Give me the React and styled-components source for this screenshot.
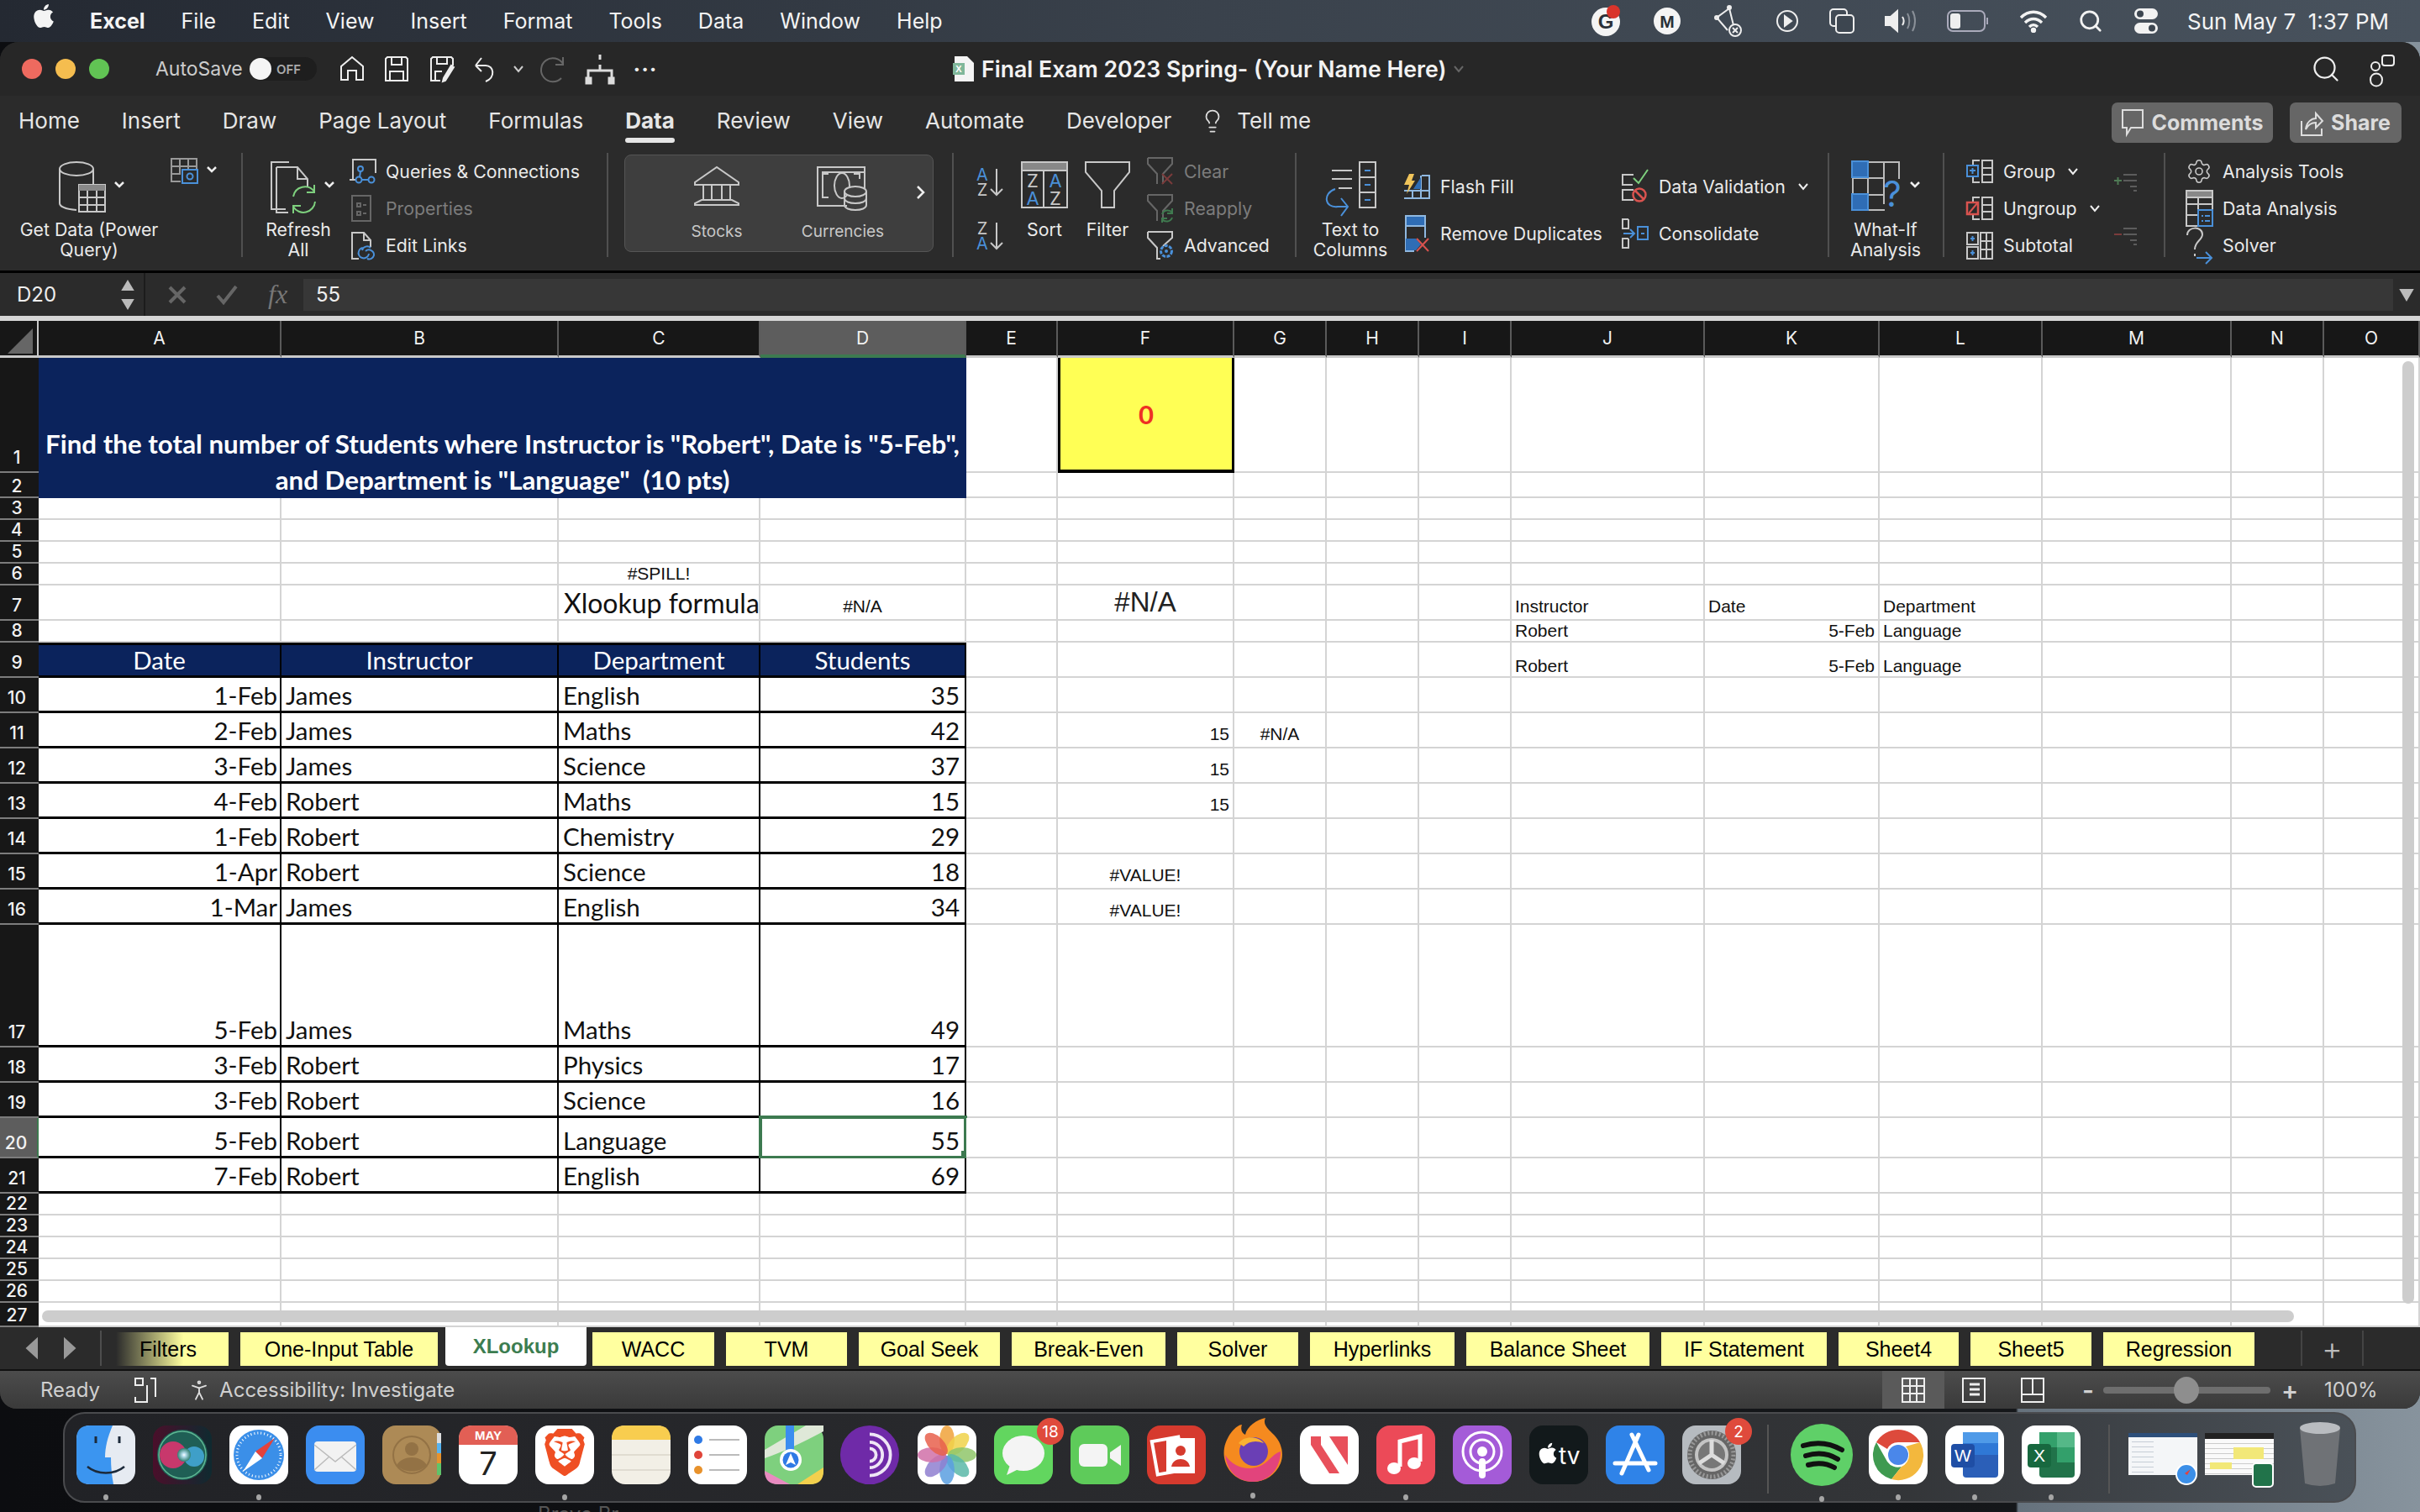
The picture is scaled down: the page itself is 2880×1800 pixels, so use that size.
import React from "react";
import styled, { createGlobalStyle, css } from "styled-components";
import { FaApple, FaSpotify } from "react-icons/fa";
import { SiBrave } from "react-icons/si";
import { Lightbulb, Settings, Search, PersonStanding } from "lucide-react";

const UI = '"Inter", "Liberation Sans", sans-serif';
const ARIAL = '"Liberation Sans", Arial, sans-serif';
const SHEET = 'Lato, "Open Sans", sans-serif';
const G = "#c8c8c8";
const DIM = "#666";
const BLUE = "#4a90d9";
const GREEN = "#3d7a50";

const Global = createGlobalStyle`
  html, body { margin: 0; padding: 0; width: 2880px; height: 1800px; overflow: hidden; }
  * { box-sizing: border-box; }
`;

/* drawing helper: 1 unit = 1 page pixel */
const Ic = ({ w, h, children, color = G, sw = 2 }) => (
  <svg width={w} height={h} viewBox={`0 0 ${w} ${h}`} fill="none" stroke={color} strokeWidth={sw} style={{ display: "block", flex: "none", overflow: "visible" }}>
    {children}
  </svg>
);
const Chev = ({ x, y }) => <path d={`M${x - 5} ${y - 3}l5 5 5-5`} stroke="#eee" strokeWidth="2.5" />;
const Letter = ({ x, y, c, fill = G, size = 20 }) => (
  <text x={x} y={y} fontFamily={UI} fontSize={size} fill={fill} stroke="none" textAnchor="middle">{c}</text>
);

/* ---------- ribbon icons ---------- */
const GetDataIcon = () => (
  <Ic w={90} h={62}>
    <ellipse cx="30" cy="9" rx="20" ry="8" />
    <path d="M10 9v41c0 4 8 7 20 8M50 9v19" />
    <rect x="33" y="28" width="31" height="32" />
    <rect x="33" y="28" width="31" height="7" fill="#888" stroke="none" />
    <path d="M43 35v25M54 35v25M33 43h31M33 52h31" />
    <Chev x={81} y={28} />
  </Ic>
);
const CameraIcon = () => (
  <Ic w={60} h={32} color="#999">
    <path d="M12 28H1V1h30v12M1 10h30M1 19h11M11 1v18M21 1v12" />
    <rect x="14" y="14" width="18" height="16" stroke={BLUE} />
    <circle cx="23" cy="22" r="3.5" stroke={BLUE} />
    <Chev x={49} y={14} />
  </Ic>
);
const RefreshIcon = () => (
  <Ic w={90} h={62}>
    <path d="M34 1H13v56h17M19 7h25l12 14v10M19 7v54h14M44 7v14h12" />
    <path d="M39 42a14 14 0 0 1 25-6M65 48a14 14 0 0 1-26 6M64 28v9h-9M39 62v-9h9" stroke="#7ed07e" />
    <Chev x={82} y={28} />
  </Ic>
);
const QueriesIcon = () => (
  <Ic w={32} h={30}>
    <path d="M5 24V1h27v16M1 25h8" />
    <g stroke={BLUE}>
      <circle cx="14" cy="12" r="3" /><circle cx="12" cy="25" r="3.5" /><circle cx="27" cy="25" r="3.5" />
      <path d="M14 15l-1 7M16 25h7" />
    </g>
  </Ic>
);
const PropertiesIcon = () => (
  <Ic w={32} h={32} color={DIM}>
    <rect x="4" y="1" width="22" height="30" />
    <rect x="10" y="10" width="4" height="4" /><rect x="10" y="20" width="4" height="4" />
    <path d="M17 12h4M17 22h4" />
  </Ic>
);
const EditLinksIcon = () => (
  <Ic w={32} h={34}>
    <path d="M12 33H4V2h14l8 9v8M18 2v9h8" />
    <g stroke={BLUE}>
      <path d="M16 23a6 6 0 0 1 10-3M24 27a6 6 0 0 1-8 5 6 6 0 0 1-4-8 6 6 0 0 1 6-4" />
      <path d="M20 24a6 6 0 0 1 10 5 6 6 0 0 1-8 4" />
    </g>
  </Ic>
);
const StocksIcon = () => (
  <Ic w={56} h={46}>
    <path d="M2 22v-3L28 1l26 18v3zM12 22v18M22 22v18M34 22v18M44 22v18M2 46v-2l8-4h36l8 4v2z" />
  </Ic>
);
const CurrencyIcon = () => (
  <Ic w={62} h={52}>
    <path d="M36 47H1V1h56v30M6 7h52" />
    <path d="M14 9H7v28h7M44 9h7v6" />
    <ellipse cx="30" cy="23" rx="9" ry="15" />
    <ellipse cx="46" cy="30" rx="13" ry="6" fill="#3e3e3e" />
    <path d="M33 30v16c0 4 6 6 13 6s13-2 13-6V30M33 38c0 4 6 6 13 6s13-2 13-6" />
  </Ic>
);
const SortAZ = ({ flip }) => (
  <Ic w={34} h={34}>
    <Letter x={8} y={15} c={flip ? "Z" : "A"} fill={flip ? G : BLUE} size={20} />
    <Letter x={8} y={33} c={flip ? "A" : "Z"} fill={flip ? BLUE : G} size={20} />
    <path d="M25 1v31M18 25l7 7 7-7" />
  </Ic>
);
const SortIcon = () => (
  <Ic w={56} h={56}>
    <rect x="1" y="1" width="54" height="54" />
    <rect x="1" y="1" width="54" height="10" fill="#888" />
    <path d="M27 11v44" />
    <Letter x={14} y={31} c="Z" size={22} /><Letter x={41} y={31} c="A" fill={BLUE} size={22} />
    <Letter x={14} y={52} c="A" fill={BLUE} size={22} /><Letter x={41} y={52} c="Z" size={22} />
  </Ic>
);
const FilterIcon = () => (
  <Ic w={54} h={56}>
    <path d="M1 1h52v12L35 35v20H20V35L1 13z" />
  </Ic>
);
const Funnel = ({ c }) => <path d={`M1 1h29v7L19 20v${c} M1 1v7l11 12v${c}`} />;
const ClearIcon = () => (
  <Ic w={32} h={34} color={DIM}>
    <Funnel c={12} />
    <path d="M18 20l12 12M30 20L18 32" stroke="#7a3b3b" />
  </Ic>
);
const ReapplyIcon = () => (
  <Ic w={32} h={34} color={DIM}>
    <Funnel c={12} />
    <path d="M18 24a7 7 0 0 1 12-2M30 28a7 7 0 0 1-12 2M30 17v6h-6M18 34v-5h6" stroke="#3f7a4f" />
  </Ic>
);
const AdvancedIcon = () => (
  <Ic w={32} h={34}>
    <path d="M1 1h29v7L19 18M1 1v7l11 12v13h4" />
    <circle cx="23" cy="24" r="6.5" stroke={BLUE} strokeWidth="3" strokeDasharray="4 1.5" />
    <circle cx="23" cy="24" r="2" fill={BLUE} stroke="none" />
  </Ic>
);
const TextColsIcon = () => (
  <Ic w={62} h={56}>
    <rect x="42" y="1" width="19" height="54" />
    <path d="M42 19h19M42 37h19" />
    <path d="M48 11h7M48 28h7M48 46h7" stroke={BLUE} />
    <path d="M9 11h24M9 21h24M17 32h16" />
    <path d="M13 33C-2 38 0 56 16 54h12M20 44l8 10-8 11" stroke={BLUE} />
  </Ic>
);
const FlashFillIcon = () => (
  <Ic w={32} h={30}>
    <path d="M1 29h30V2H22M1 20h30M11 20v9M21 2v27" stroke="#8fb8e0" />
    <path d="M12 18L21 4v14z" fill="#2f6db5" stroke="none" />
    <path d="M7 0h6l-3 8h4L4 24l3-11H1z" fill="#f0c45a" stroke="none" />
  </Ic>
);
const RemoveDupIcon = () => (
  <Ic w={32} h={44}>
    <rect x="3" y="1" width="23" height="12" fill="#2f6db5" stroke="#8fb8e0" />
    <path d="M3 13v30h10M26 13v14" stroke="#8fb8e0" />
    <path d="M3 28h12l6 7-6 7H3z" fill="#2f6db5" stroke="none" />
    <path d="M16 28l14 15M30 28L16 43" stroke="#d9534f" />
  </Ic>
);
const ValidationIcon = () => (
  <Ic w={32} h={44}>
    <path d="M14 8H1v12h12M14 26H1v12h13" />
    <path d="M14 12l6 6L31 2" stroke="#7ed07e" />
    <circle cx="21" cy="32" r="7.5" stroke="#d9534f" strokeWidth="2.5" />
    <path d="M16 27l10 10" stroke="#d9534f" strokeWidth="2.5" />
  </Ic>
);
const ConsolidateIcon = () => (
  <Ic w={32} h={36}>
    <path d="M8 1H1v11h7V1M8 24H1v11h7V24" />
    <path d="M2 18h12M10 13l5 5-5 5" stroke={BLUE} />
    <rect x="19" y="10" width="12" height="15" stroke={BLUE} />
    <path d="M23 18h4" stroke={BLUE} />
  </Ic>
);
const WhatIfIcon = () => (
  <Ic w={86} h={56}>
    <path d="M4 1h55v20M4 1v56M4 20h38M4 40h38M22 1v39M41 1v50M4 58h38" stroke="#bbb" />
    <rect x="3" y="0" width="19" height="19" fill="#2f6db5" stroke={BLUE} />
    <rect x="3" y="39" width="19" height="19" fill="#2f6db5" stroke={BLUE} />
    <Letter x={51} y={54} c="?" fill={BLUE} size={42} />
    <Chev x={78} y={28} />
  </Ic>
);
const GroupIcon = () => (
  <Ic w={32} h={28}>
    <path d="M8 7V1h8M8 20v7h8" />
    <rect x="1" y="7" width="13" height="13" stroke={BLUE} />
    <path d="M4 13h7M7.5 10v7" stroke={BLUE} />
    <rect x="19" y="1" width="12" height="26" />
    <path d="M19 10h12M19 18h12" />
  </Ic>
);
const UngroupIcon = () => (
  <Ic w={32} h={28}>
    <path d="M8 6V1h8M8 22v5h8" />
    <rect x="1" y="7" width="13" height="14" stroke="#d9534f" strokeWidth="2.5" />
    <path d="M3 20L13 8" stroke="#d9534f" />
    <rect x="19" y="1" width="12" height="26" />
    <path d="M19 10h12M19 18h12" />
  </Ic>
);
const SubtotalIcon = () => (
  <Ic w={32} h={32}>
    <rect x="1" y="1" width="13" height="14" />
    <rect x="1" y="18" width="13" height="14" />
    <path d="M5 8h5M7.5 5v6M5 25h5M7.5 22v6" stroke={BLUE} />
    <rect x="17" y="1" width="14" height="31" />
    <path d="M24 1v31M17 11h14M17 21h14" />
  </Ic>
);
const IndentIcon = ({ color, plus }) => (
  <Ic w={30} h={22} color="#5c5c5c">
    <path d="M12 2h16M12 9h16M20 16h8M24 21h4" />
    <path d={plus ? "M1 9h9M5.5 5v9" : "M1 9h9"} stroke={color} />
  </Ic>
);
const DataAnalysisIcon = () => (
  <Ic w={32} h={44}>
    <rect x="1" y="1" width="31" height="42" />
    <rect x="1" y="1" width="31" height="8" fill="#888" />
    <path d="M1 17h31M1 30h14M15 9v34" />
    <rect x="15" y="24" width="17" height="19" fill="#2b2b2b" stroke={BLUE} />
    <path d="M19 31h2M23 31h6M19 37h2M23 37h6" stroke={BLUE} />
  </Ic>
);
const SolverIcon = () => (
  <Ic w={32} h={44}>
    <path d="M2 10C2-1 20-1 20 9c0 7-9 8-9 18M11 32v3" />
    <path d="M13 37h18M24 30l7 7-7 7" stroke={BLUE} />
  </Ic>
);

/* ---------- title bar + status icons ---------- */
const HomeIcon = () => <Ic w={30} h={30} color="#eee"><path d="M2 28V12L15 1l13 11v16h-8V17h-10v11z" /></Ic>;
const SaveIcon = () => <Ic w={28} h={30} color="#eee"><path d="M3 1h22l2 2v26H1V3zM8 1v9h12V1M6 29V18h16v11" /></Ic>;
const SaveAsIcon = () => <Ic w={30} h={30} color="#eee"><path d="M12 29H1V3l2-2h22l2 2v8M8 1v8h12V1M6 29V18h8" /><path d="M28 13L18 29l-3 1 1-4 9-15z" fill="#eee" /></Ic>;
const UndoIcon = () => <Ic w={30} h={32} color="#eee"><path d="M3 12h12c10 0 12 14 0 19M3 12l7-9M3 12l7 7" /></Ic>;
const RedoIcon = () => <Ic w={30} h={32} color={DIM}><path d="M26 10A14 14 0 1 0 24 27M26 2v9h-9" /></Ic>;
const ShapeIcon = () => <Ic w={36} h={34} color="#ddd" sw={3}><path d="M18 0v6M18 12v6M4 30v-11h28v11M18 18" /><rect x="2" y="28" width="5" height="6" fill="#ddd" /><rect x="29" y="28" width="5" height="6" fill="#ddd" /></Ic>;
const SmallChev = ({ c = "#ccc" }) => <Ic w={14} h={10} color={c}><path d="M2 2l5 6 5-6" /></Ic>;
const PeopleIcon = () => <Ic w={34} h={34} color="#eee"><rect x="17" y="1" width="14" height="12" rx="3" /><circle cx="9" cy="14" r="5" /><path d="M3 30c0-10 14-10 14 0s-14 10-14 0z" /></Ic>;
const BulbIcon = () => <Lightbulb size={30} color="#ddd" strokeWidth={1.4} />;
const CommentIcon = () => <Ic w={26} h={32} color="#ddd"><path d="M1 1h24v21H11l-5 8v-8H1z" /></Ic>;
const ShareIcon = () => <Ic w={26} h={32} color="#ddd"><path d="M1 14v17h24v-8M6 24c1-9 7-13 12-13V5l8 9-8 8v-6c-5 0-9 2-12 8z" /></Ic>;

const MenuIcons = [
  <svg key="g" width="38" height="40" viewBox="0 0 38 40"><circle cx="18" cy="21" r="17" fill="#f4f4f4" /><text x="18" y="29" fontSize="24" fontWeight="700" fontFamily={ARIAL} textAnchor="middle" fill="#2a3038">G</text><circle cx="27" cy="9" r="8" fill="#d9342b" /></svg>,
  <svg key="m" width="34" height="34" viewBox="0 0 34 34"><circle cx="17" cy="17" r="16" fill="#f4f4f4" /><text x="17" y="25" fontSize="21" fontWeight="700" fontFamily={ARIAL} textAnchor="middle" fill="#2a3038">M</text></svg>,
  <Ic key="c" w={40} h={38} color="#eee"><circle cx="21" cy="3" r="2" fill="#eee" /><path d="M21 4L6 15l13 15M21 4l5 20" /><circle cx="6" cy="15" r="2" /><circle cx="28" cy="30" r="7" /><path d="M25 27l6 6M31 27l-6 6" /></Ic>,
  <Ic key="p" w={28} h={28} color="#eee"><circle cx="14" cy="14" r="12" /><path d="M11 8l8 6-8 6z" fill="#eee" /></Ic>,
  <Ic key="w" w={30} h={30} color="#eee"><rect x="1" y="1" width="20" height="20" rx="4" /><rect x="8" y="8" width="21" height="21" rx="4" fill="#3d4650" /></Ic>,
  <Ic key="v" w={38} h={28} color="#eee"><path d="M1 9h6l8-7v24l-8-7H1z" fill="#eee" /><path d="M21 9c2 3 2 7 0 10" /><path d="M27 5c3 5 3 13 0 18M33 2c4 7 4 17 0 24" stroke="#8a9098" /></Ic>,
  <Ic key="b" w={50} h={26} color="#aab"><rect x="1" y="1" width="44" height="24" rx="6" /><rect x="4" y="4" width="12" height="18" rx="3" fill="#eee" stroke="none" /><path d="M48 9v8" /></Ic>,
  <svg key="wf" width="34" height="28" viewBox="0 0 34 28" fill="none" stroke="#f2f2f2" strokeWidth="3.4"><path d="M2 10c9-9 21-9 30 0M7 16c6-6 14-6 20 0M12 21c3-3 7-3 10 0" /><circle cx="17" cy="25" r="1.5" fill="#f2f2f2" /></svg>,
  <Search key="s" size={30} color="#f2f2f2" strokeWidth={2.2} />,
  <svg key="cc" width="30" height="32" viewBox="0 0 30 32"><rect x="1" y="1" width="28" height="13" rx="6.5" fill="#f2f2f2" /><circle cx="8" cy="7.5" r="4" fill="#3d4650" /><rect x="1" y="18" width="28" height="13" rx="6.5" fill="#f2f2f2" /><circle cx="22" cy="24.5" r="4" fill="#3d4650" /></svg>,
];
const MENU_X = [38, 34, 40, 28, 30, 38, 50, 34, 30, 30];

/* ---------- dock tiles ---------- */
const Tile = ({ children, bg = "#fff", w = 72 }) => (
  <svg width={w} height="72" viewBox="0 0 72 72" style={{ display: "block" }}>
    <rect x="1" y="1" width="70" height="70" rx="16" fill={bg} />
    {children}
  </svg>
);
const Tiles = {
  finder: <Tile bg="#e6ebf2"><path d="M17 1h27c-6 14-9 26-9 38h7c0 11 1 22 3 32H17Q1 71 1 55V17Q1 1 17 1z" fill="#3b95f0" /><path d="M24 14v8M52 14v8" stroke="#1c2a3a" strokeWidth="3" /><path d="M14 50c12 10 32 10 44 0" stroke="#1c2a3a" strokeWidth="2.5" fill="none" /></Tile>,
  siri: (
    <Tile bg="url(#siriBg)">
      <defs>
        <linearGradient id="siriBg" x1="0" x2="1" y1="0" y2="0"><stop offset="0" stopColor="#4a0f2a" /><stop offset="1" stopColor="#0f2a30" /></linearGradient>
        <radialGradient id="siriOrb"><stop offset="0" stopColor="#fff" /><stop offset="0.25" stopColor="#b9e0f0" /><stop offset="1" stopColor="#2f7f70" /></radialGradient>
      </defs>
      <circle cx="36" cy="36" r="30" fill="#1f5f55" />
      <circle cx="36" cy="36" r="28" fill="none" stroke="#5fb894" strokeWidth="1.5" />
      <circle cx="25" cy="36" r="16" fill="#c8386c" />
      <circle cx="50" cy="38" r="12" fill="#3f9fc8" />
      <circle cx="38" cy="36" r="8" fill="url(#siriOrb)" />
    </Tile>
  ),
  safari: <Tile><circle cx="36" cy="36" r="30" fill="#3b8fe8" /><circle cx="36" cy="36" r="26" fill="none" stroke="#fff" strokeWidth="3" strokeDasharray="1 3" /><path d="M55 16L40 40 32 32z" fill="#e4423c" /><path d="M17 56l15-24 8 8z" fill="#fff" /></Tile>,
  mail: <Tile bg="#3b8df0"><rect x="11" y="20" width="50" height="36" rx="4" fill="#f2f2f2" /><path d="M11 24l25 20 25-20M11 54l18-16M61 54L43 38" stroke="#bbb" strokeWidth="1.5" fill="none" /></Tile>,
  contacts: <Tile bg="#ad8a56"><path d="M66 10h5v12h-5z" fill="#ddd" /><path d="M66 22h5v12h-5z" fill="#56b3f0" /><path d="M66 34h5v12h-5z" fill="#e8922c" /><path d="M66 46h5v14h-5z" fill="#5fc46a" /><circle cx="36" cy="36" r="22" fill="none" stroke="#937245" strokeWidth="2" /><circle cx="36" cy="29" r="8" fill="#937245" /><path d="M18 48c8-12 28-12 36 0-8 10-28 10-36 0z" fill="#937245" /></Tile>,
  calendar: <Tile><path d="M1 24V17Q1 1 17 1h38q16 0 16 16v7z" fill="#e25f55" /><text x="36" y="18" textAnchor="middle" fontFamily={ARIAL} fontWeight="700" fontSize="15" fill="#fff">MAY</text><text x="36" y="60" textAnchor="middle" fontFamily={UI} fontSize="38" fill="#222">7</text></Tile>,
  brave: <Tile><foreignObject x="8" y="5" width="56" height="62"><SiBrave size={56} color="#ef4f23" /></foreignObject></Tile>,
  notes: <Tile bg="#f2efe6"><path d="M1 18V17Q1 1 17 1h38q16 0 16 16v1z" fill="#f8cd4f" /><path d="M1 36h70M1 54h70" stroke="#dad6ca" strokeWidth="1.5" /></Tile>,
  reminders: <Tile><circle cx="13" cy="18" r="5" fill="#2f7ae5" /><circle cx="13" cy="36" r="5" fill="#e0453a" /><circle cx="13" cy="54" r="5" fill="#e8922c" /><path d="M26 18h36M26 36h36M26 54h36" stroke="#bbb" strokeWidth="2" /></Tile>,
  maps: <Tile bg="#7ed07e"><path d="M1 40Q30 30 71 8V1H50L1 30z" fill="#dfe8d8" /><path d="M1 55l30 16H17Q1 71 1 55z" fill="#e88ac0" /><path d="M40 71l31-20v4q0 16-16 16z" fill="#f3d04d" /><path d="M26 1h10v30H26z" fill="#3b8df0" /><circle cx="32" cy="42" r="13" fill="#fff" /><circle cx="32" cy="42" r="9.5" fill="#2f7ae5" /><path d="M32 34l6 14-6-3-6 3z" fill="#fff" /></Tile>,
  tor: <svg width="76" height="72" viewBox="0 0 76 76" style={{ display: "block", marginLeft: -2 }}><circle cx="38" cy="38" r="37" fill="#6f2aa8" /><path d="M38 12a26 26 0 0 1 0 52M38 22a16 16 0 0 1 0 32M38 30a8 8 0 0 1 0 16" fill="none" stroke="#efe6f6" strokeWidth="4" /></svg>,
  photos: <Tile>{["#f0a23a","#f0d24a","#8fc66a","#5bb8a8","#5b9fe0","#8f7fd0","#d070a8","#e8604c"].map((c, i) => <ellipse key={c} cx="36" cy="18" rx="9" ry="17" fill={c} opacity="0.85" transform={`rotate(${i * 45} 36 36)`} />)}</Tile>,
  messages: <Tile bg="#62d65f"><ellipse cx="36" cy="34" rx="25" ry="21" fill="#f4f4f4" /><path d="M20 48l-4 12 14-7z" fill="#f4f4f4" /></Tile>,
  facetime: <Tile bg="#5ecb5a"><rect x="11" y="23" width="34" height="27" rx="6" fill="#f4f4f4" /><path d="M48 33l13-9v25l-13-9z" fill="#f4f4f4" /></Tile>,
  booth: <Tile bg="#d63a2e"><rect x="10" y="17" width="32" height="40" fill="none" stroke="#fff" strokeWidth="4" transform="rotate(-10 26 37)" /><rect x="24" y="16" width="34" height="42" fill="#fff" /><circle cx="41" cy="31" r="6" fill="#d63a2e" /><path d="M30 50c2-12 20-12 22 0z" fill="#d63a2e" /></Tile>,
  firefox: <svg width="78" height="78" viewBox="0 0 78 78" style={{ display: "block", margin: "-8px -3px 0" }}><path d="M39 76C14 76 2 54 5 36 8 20 20 8 26 8c-2 6 0 10 4 12C32 10 44 2 54 0c-4 8 4 14 10 20 10 10 12 24 8 34-6 14-18 22-33 22z" fill="#f58a1f" /><path d="M39 76C20 76 8 62 6 44c10 16 30 20 44 12 10-6 14-14 22-16 0 20-14 36-33 36z" fill="#e2447c" /><circle cx="40" cy="40" r="17" fill="#6a3fb5" /><path d="M22 30c8-10 24-8 30 0-10-4-18-2-24 4z" fill="#f9b233" /></svg>,
  news: <Tile><path d="M14 14h44v44H14z" fill="#e8505b" /><path d="M26 14h10l22 34v10H48L26 24zM14 24l22 34H14z" fill="#fff" /></Tile>,
  music: <Tile bg="#ec4a58"><path d="M29 50V20l24-6v30" fill="none" stroke="#fff" strokeWidth="5" /><ellipse cx="22" cy="52" rx="8" ry="7" fill="#fff" /><ellipse cx="46" cy="46" rx="8" ry="7" fill="#fff" /></Tile>,
  podcasts: <Tile bg="#a45bd8"><circle cx="36" cy="32" r="23" fill="none" stroke="#fff" strokeWidth="3" /><circle cx="36" cy="32" r="14" fill="none" stroke="#fff" strokeWidth="3" /><circle cx="36" cy="32" r="6" fill="#fff" /><rect x="32" y="40" width="8" height="24" rx="4" fill="#fff" /></Tile>,
  tv: <Tile bg="#12191b"><foreignObject x="9" y="20" width="28" height="32"><FaApple size={28} color="#fff" /></foreignObject><text x="36" y="47" fontFamily={UI} fontSize="28" fill="#fff">tv</text></Tile>,
  appstore: <Tile bg="#2f83e8"><path d="M40 12L20 58M32 12l20 42M12 46h48" stroke="#fff" strokeWidth="5" strokeLinecap="round" fill="none" /></Tile>,
  prefs: <Tile bg="#b6bbc0"><circle cx="36" cy="36" r="29" fill="#666" /><circle cx="36" cy="36" r="26" fill="none" stroke="#999" strokeWidth="5" strokeDasharray="2 2.5" /><circle cx="36" cy="36" r="20" fill="#c4c4c4" /><circle cx="36" cy="36" r="16" fill="#777" /><path d="M36 36V18M36 36L21 46M36 36l15 10" stroke="#ddd" strokeWidth="5" /></Tile>,
  spotify: <svg width="76" height="76" viewBox="0 0 76 76" style={{ display: "block", margin: "-2px -2px 0" }}><circle cx="38" cy="38" r="37" fill="#5fd068" /><path d="M16 27c16-5 32-3 46 5M19 39c13-4 27-3 38 4M22 50c11-3 22-2 31 3" stroke="#111" strokeWidth="6" strokeLinecap="round" fill="none" /></svg>,
  chrome: <Tile><path d="M36 6a30 30 0 0 1 26 15H36a15 15 0 0 0-13 8L10 21A30 30 0 0 1 36 6z" fill="#dd4a3c" /><path d="M10 21l13 23a15 15 0 0 0 17 6L28 65A30 30 0 0 1 10 21z" fill="#3f9a50" /><path d="M62 21a30 30 0 0 1-34 44l12-15a15 15 0 0 0 9-14 15 15 0 0 0-4-10z" fill="#f3b83d" /><circle cx="36" cy="36" r="12" fill="#4a87ea" /></Tile>,
  word: <Tile><rect x="22" y="9" width="42" height="54" rx="4" fill="#2b5fb8" /><path d="M22 9h42v13H22z" fill="#4f9ae8" /><path d="M22 22h42v14H22z" fill="#2f78d6" /><rect x="8" y="23" width="28" height="28" rx="4" fill="#1f4ea5" /><text x="22" y="44" textAnchor="middle" fontFamily={ARIAL} fontSize="21" fill="#fff">W</text></Tile>,
  excel: <Tile><rect x="22" y="9" width="42" height="54" rx="4" fill="#21734a" /><path d="M43 9h21v18H43z" fill="#55b888" /><path d="M22 9h21v18H22zM43 27h21v18H43z" fill="#33a06b" /><rect x="8" y="23" width="28" height="28" rx="4" fill="#17683f" /><text x="22" y="44" textAnchor="middle" fontFamily={ARIAL} fontSize="21" fill="#fff">X</text></Tile>,
};

/* ---------- sheet data ---------- */
const COLS = [
  ["A", 289], ["B", 330], ["C", 240], ["D", 245], ["E", 109], ["F", 210], ["G", 110], ["H", 110],
  ["I", 110], ["J", 230], ["K", 208], ["L", 194], ["M", 225], ["N", 110], ["O", 114],
];
const ROW_H = [137, 30, 26, 26, 26, 26, 42, 26, 42, 42, 42, 42, 42, 42, 42, 42, 146, 42, 42, 48, 42, 26, 26, 26, 26, 26, 29];

const TABLE = [
  ["1-Feb", "James", "English", 35], ["2-Feb", "James", "Maths", 42], ["3-Feb", "James", "Science", 37],
  ["4-Feb", "Robert", "Maths", 15], ["1-Feb", "Robert", "Chemistry", 29], ["1-Apr", "Robert", "Science", 18],
  ["1-Mar", "James", "English", 34], ["5-Feb", "James", "Maths", 49], ["3-Feb", "Robert", "Physics", 17],
  ["3-Feb", "Robert", "Science", 16], ["5-Feb", "Robert", "Language", 55], ["7-Feb", "Robert", "English", 69],
];

const CELLS = {
  A1: { kind: "title", cs: 4, rs: 2, text: 'Find the total number of Students where Instructor is "Robert", Date is "5-Feb",\nand Department is "Language"  (10 pts)' },
  F1: { kind: "answer", text: "0" },
  C6: { kind: "tight", align: "center", text: "#SPILL!" },
  C7: { kind: "formula", text: "Xlookup formula" },
  D7: { kind: "small", align: "center", text: "#N/A" },
  F7: { kind: "big", text: "#N/A" },
  J7: { kind: "small", text: "Instructor" }, K7: { kind: "small", text: "Date" }, L7: { kind: "small", text: "Department" },
  J8: { kind: "tight", text: "Robert" }, K8: { kind: "tight", align: "flex-end", text: "5-Feb" }, L8: { kind: "tight", text: "Language" },
  J9: { kind: "tight", text: "Robert" }, K9: { kind: "tight", align: "flex-end", text: "5-Feb" }, L9: { kind: "tight", text: "Language" },
  F11: { kind: "small", align: "flex-end", text: "15" }, G11: { kind: "small", align: "center", text: "#N/A" },
  F12: { kind: "small", align: "flex-end", text: "15" }, F13: { kind: "small", align: "flex-end", text: "15" },
  F15: { kind: "small", align: "center", text: "#VALUE!" }, F16: { kind: "small", align: "center", text: "#VALUE!" },
};
["A", "B", "C", "D"].forEach((c) => { ["1", "2"].forEach((r) => { if (c + r !== "A1") CELLS[c + r] = { skip: true }; }); });
["Date", "Instructor", "Department", "Students"].forEach((t, i) => { CELLS["ABCD"[i] + 9] = { kind: "head", text: t }; });
TABLE.forEach((row, i) => {
  const n = i + 10;
  CELLS["A" + n] = { kind: "data", align: "flex-end", text: row[0] };
  CELLS["B" + n] = { kind: "data", text: row[1] };
  CELLS["C" + n] = { kind: "data", text: row[2] };
  CELLS["D" + n] = { kind: "num", align: "flex-end", text: row[3] };
});

const SHEETS = [
  ["Filters", 134], ["One-Input Table", 235], ["XLookup", 168], ["WACC", 145], ["TVM", 144], ["Goal Seek", 168], ["Break-Even", 183],
  ["Solver", 144], ["Hyperlinks", 172], ["Balance Sheet", 218], ["IF Statement", 197], ["Sheet4", 143], ["Sheet5", 144], ["Regression", 180],
];

/* ---------- page ---------- */
const Page = styled.div`
  width: 2880px;
  height: 1800px;
  display: flex;
  flex-direction: column;
  overflow: hidden;
  font-family: ${UI};
  background: linear-gradient(90deg, #0c0d10 0, #15171a 83.3%, #66727d 83.4%, #87939d 100%);
`;
const MenuBar = styled.div`
  height: 50px;
  flex: none;
  display: flex;
  align-items: center;
  color: #f4f4f4;
  font-size: 25px;
  background: linear-gradient(90deg, #242932 0, #3a424c 50%, #48525d 100%);
`;
const AppleSlot = styled.div`
  width: 107px;
  padding-left: 36px;
  padding-bottom: 6px;
`;
const MenuItem = styled.span`
  margin-right: 43px;
  font-weight: ${(p) => (p.$bold ? 700 : 400)};
`;
const MenuRight = styled.div`
  margin-left: auto;
  display: flex;
  align-items: center;
  padding-right: 37px;
  font-size: 26px;
`;
const MenuIconSlot = styled.div`
  width: ${(p) => p.$w}px;
  display: flex;
  justify-content: center;
`;
const Clock = styled.span`
  margin-left: 16px;
  white-space: pre;
`;
const Window = styled.div`
  height: 1627px;
  flex: none;
  display: flex;
  flex-direction: column;
  overflow: hidden;
  border-radius: 22px 22px 20px 20px;
  background: #2b2b2b;
`;
const TitleBar = styled.div`
  height: 64px;
  flex: none;
  display: flex;
  align-items: center;
  background: #272727;
  color: #eee;
`;
const TitleLeft = styled.div`
  width: 1134px;
  flex: none;
  display: flex;
  align-items: center;
  padding-left: 26px;
`;
const Lights = styled.div`
  display: flex;
  gap: 16px;
  margin-right: 55px;
`;
const Light = styled.span`
  width: 24px;
  height: 24px;
  border-radius: 50%;
  background: ${(p) => p.$c};
`;
const AutoSave = styled.span`
  font-size: 23px;
  color: #ccc;
  width: 112px;
`;
const Toggle = styled.div`
  width: 80px;
  height: 28px;
  border-radius: 14px;
  background: #1e1e1e;
  display: flex;
  align-items: center;
  gap: 6px;
  font-size: 15px;
  font-weight: 600;
  color: #aaa;
  &::before {
    content: "";
    width: 26px;
    height: 26px;
    border-radius: 50%;
    background: #f5f5f5;
  }
`;
const Quick = styled.div`
  display: flex;
  margin-left: 15px;
`;
const QuickBtn = styled.div`
  width: ${(p) => p.$w}px;
  display: flex;
  justify-content: center;
  align-items: center;
`;
const Dots = styled.span`
  font-size: 26px;
  letter-spacing: 1px;
  font-weight: 700;
  line-height: 1;
  padding-bottom: 12px;
`;
const DocTitle = styled.div`
  display: flex;
  align-items: center;
  gap: 8px;
  font-size: 26.7px;
  font-weight: 600;
  color: #f2f2f2;
`;
const TitleRight = styled.div`
  margin-left: auto;
  display: flex;
  align-items: center;
  gap: 32px;
  padding-right: 28px;
`;
const RibbonTabs = styled.div`
  height: 72px;
  flex: none;
  display: flex;
  align-items: flex-start;
  padding-left: 22px;
  gap: 50px;
  color: #e6e6e6;
  font-size: 26px;
`;
const RibbonTab = styled.div`
  position: relative;
  display: flex;
  align-items: center;
  gap: 14px;
  height: 58px;
  padding-top: 1px;
  font-weight: ${(p) => (p.$active ? 700 : 400)};
  margin-left: ${(p) => p.$ml || 0}px;
  ${(p) => p.$active && css`
    &::after {
      content: "";
      position: absolute;
      left: 0;
      right: 0;
      top: 50px;
      height: 6px;
      border-radius: 3px;
      background: #e6e6e6;
    }
  `}
`;
const TopButtons = styled.div`
  margin-left: auto;
  display: flex;
  gap: 20px;
  padding: 8px 22px 0 0;
`;
const TopButton = styled.div`
  width: ${(p) => p.$w}px;
  height: 48px;
  border-radius: 7px;
  background: #666;
  color: #dcdcdc;
  font-weight: 700;
  font-size: 25px;
  display: flex;
  align-items: center;
  justify-content: center;
  gap: 10px;
`;
const Ribbon = styled.div`
  height: 143px;
  flex: none;
  display: flex;
  border-bottom: 3px solid #000;
  color: #eaeaea;
  font-size: 21.3px;
  margin-top: -4px;
`;
const Group = styled.div`
  width: ${(p) => p.$w}px;
  height: 124px;
  flex: none;
  display: flex;
  ${(p) => !p.$first && "border-left: 2px solid #505050;"}
`;
const BigButton = styled.div`
  width: ${(p) => p.$w}px;
  margin-left: ${(p) => p.$ml || 0}px;
  padding: 10px 0 0 ${(p) => p.$pl || 0}px;
  flex: none;
  display: flex;
  flex-direction: column;
  align-items: center;
`;
const IconSlot = styled.div`
  height: 69px;
  flex: none;
  white-space: nowrap;
`;
const BigLabel = styled.div`
  line-height: 24px;
  text-align: center;
  white-space: pre;
`;
const SmallCol = styled.div`
  width: ${(p) => (p.$w ? p.$w + "px" : "auto")};
  margin-left: ${(p) => p.$ml || 0}px;
  padding-top: ${(p) => p.$pt || 0}px;
  flex: none;
  display: flex;
  flex-direction: column;
`;
const SmallRow = styled.div`
  height: ${(p) => p.$h || 44}px;
  flex: none;
  display: flex;
  align-items: center;
  white-space: nowrap;
  color: ${(p) => (p.$off ? "#7c7c7c" : "inherit")};
`;
const SmallIcon = styled.div`
  width: 32px;
  margin-right: 12px;
  flex: none;
  display: flex;
  justify-content: center;
`;
const ChevSlot = styled.span`
  margin-left: 14px;
`;
const StockBox = styled.div`
  width: 368px;
  height: 116px;
  margin: 2px 0 0 19px;
  padding: 13px 0 0 34px;
  display: flex;
  border: 1px solid #555;
  border-radius: 8px;
  background: #3e3e3e;
  color: #c8c8c8;
  font-size: 19px;
`;
const StockItem = styled.div`
  width: 150px;
  flex: none;
  display: flex;
  flex-direction: column;
  align-items: center;
`;
const StockIcon = styled.div`
  height: 56px;
`;
const StockLabel = styled.div`
  margin-top: 10px;
  line-height: 24px;
`;
const StockMore = styled.div`
  margin: 22px 0 0 12px;
`;
const SortCol = styled.div`
  margin: 18px 0 0 26px;
  display: flex;
  flex-direction: column;
  gap: 30px;
`;
const IndentCol = styled.div`
  padding-top: 24px;
  display: flex;
  flex-direction: column;
  gap: 42px;
`;
const FormulaBar = styled.div`
  height: 51px;
  flex: none;
  display: flex;
  align-items: center;
  background: #2b2b2b;
  color: #eee;
  font-size: 24px;
`;
const NameBox = styled.div`
  width: 173px;
  height: 100%;
  flex: none;
  padding-left: 20px;
  display: flex;
  align-items: center;
  justify-content: space-between;
  padding-right: 12px;
  border-right: 2px solid #1c1c1c;
`;
const Stepper = styled.div`
  display: flex;
  flex-direction: column;
  gap: 10px;
`;
const FormulaTools = styled.div`
  width: 188px;
  flex: none;
  display: flex;
  align-items: center;
  gap: 34px;
  padding-left: 26px;
  color: #666;
`;
const Fx = styled.span`
  font-family: "Liberation Serif", serif;
  font-style: italic;
  font-size: 32px;
  color: #777;
  margin-left: 2px;
`;
const FormulaInput = styled.div`
  width: 2487px;
  height: 38px;
  flex: none;
  background: #373737;
  padding-left: 15px;
  display: flex;
  align-items: center;
`;
const FormulaMore = styled.div`
  margin-left: 8px;
`;
const Strip = styled.div`
  height: 6px;
  flex: none;
  background: #d6d6d6;
`;
const SheetArea = styled.div`
  position: relative;
  flex: none;
  height: 1198px;
  background: #fff;
  overflow: hidden;
`;
const Grid = styled.div`
  display: grid;
  grid-template-columns: 46px ${COLS.map((c) => c[1] + "px").join(" ")};
  grid-template-rows: 44px ${ROW_H.map((h) => h + "px").join(" ")};
`;
const Corner = styled.div`
  background: #171717;
  border-bottom: 3px solid #c9c9c9;
  border-right: 2px solid #c9c9c9;
  &::after {
    content: "";
    display: block;
    width: 30px;
    height: 30px;
    margin: 9px 0 0 9px;
    background: #666;
    clip-path: polygon(100% 0, 100% 100%, 0 100%);
  }
`;
const ColHead = styled.div`
  background: ${(p) => (p.$active ? "#5d5d5d" : "#171717")};
  color: #f2f2f2;
  border-right: 2px solid #5a5a5a;
  border-bottom: ${(p) => (p.$active ? `4px solid ${GREEN}` : "3px solid #c9c9c9")};
  font-size: 21px;
  display: flex;
  align-items: center;
  justify-content: center;
`;
const RowHead = styled.div`
  background: ${(p) => (p.$active ? "#5d5d5d" : "#171717")};
  color: #f2f2f2;
  border-bottom: 2px solid #7c7c7c;
  ${(p) => p.$active && `border-right: 2px solid ${GREEN};`}
  font-size: 21px;
  font-weight: 500;
  line-height: 24px;
  display: flex;
  align-items: flex-end;
  justify-content: center;
  padding-bottom: ${(p) => p.$pb}px;
  padding-right: 6px;
`;

const KIND = {
  plain: css``,
  small: css`
    font-family: ${ARIAL};
    font-size: 21px;
    line-height: 24px;
    padding: 0 4px 3px;
    color: #111;
  `,
  tight: css`
    font-family: ${ARIAL};
    font-size: 21px;
    line-height: 24px;
    padding: 0 4px;
    color: #111;
  `,
  big: css`
    font-family: ${ARIAL};
    font-size: 33px;
    line-height: 36px;
    justify-content: center;
    padding-bottom: 2px;
    color: #222;
  `,
  formula: css`
    font-family: ${SHEET};
    font-size: 32px;
    line-height: 38px;
    padding: 0 0 0 6px;
    color: #111;
  `,
  title: css`
    background: #0b235c;
    color: #fff;
    font-family: ${SHEET};
    font-weight: 700;
    font-size: 31.3px;
    line-height: 43px;
    text-align: center;
    justify-content: center;
    border: 0;
    white-space: pre;
  `,
  answer: css`
    background: #ffff55;
    color: #ee3124;
    font-family: ${SHEET};
    font-weight: 700;
    font-size: 31px;
    align-items: center;
    justify-content: center;
    border-left: 3px solid #000;
    border-right: 3px solid #000;
    border-bottom: 4px solid #000;
  `,
  head: css`
    background: #0b235c;
    color: #fff;
    font-family: ${SHEET};
    font-size: 29.5px;
    line-height: 36px;
    justify-content: center;
    border-top: 3px solid #000;
    border-right: 2px solid #000;
    border-bottom: 3px solid #000;
  `,
  data: css`
    font-family: ${SHEET};
    font-size: 29.5px;
    line-height: 36px;
    color: #111;
    padding: 0 3px 0 5px;
    border-right: 2px solid #000;
    border-bottom: 3px solid #000;
  `,
  num: css`
    font-family: ${SHEET};
    font-size: 29.5px;
    line-height: 36px;
    color: #111;
    padding: 0 6px 0 5px;
    border-right: 2px solid #000;
    border-bottom: 3px solid #000;
  `,
};
const Cell = styled.div`
  position: relative;
  grid-column: span ${(p) => p.$cs || 1};
  grid-row: span ${(p) => p.$rs || 1};
  min-width: 0;
  display: flex;
  align-items: flex-end;
  justify-content: ${(p) => p.$align || "flex-start"};
  white-space: nowrap;
  background: #fff;
  border-right: 2px solid #d4d4d4;
  border-bottom: 2px solid #d4d4d4;
  ${(p) => KIND[p.$kind || "plain"]}
`;
const Selection = styled.div`
  position: absolute;
  inset: -3px -3px -4px -2px;
  border: 4px solid ${GREEN};
  pointer-events: none;
  &::after {
    content: "";
    position: absolute;
    right: -4px;
    bottom: -4px;
    width: 7px;
    height: 10px;
    background: ${GREEN};
  }
`;
const VScroll = styled.div`
  position: absolute;
  right: 7px;
  top: 48px;
  width: 14px;
  height: 1122px;
  border-radius: 7px;
  background: #cdcdcd;
`;
const HScroll = styled.div`
  position: absolute;
  left: 50px;
  top: 1178px;
  width: 2680px;
  height: 14px;
  border-radius: 7px;
  background: #cdcdcd;
`;
const TabBar = styled.div`
  height: 52px;
  flex: none;
  display: flex;
  background: #2b2b2b;
  border-bottom: 2px solid #111;
`;
const TabNav = styled.div`
  width: 121px;
  margin-top: 4px;
  height: 42px;
  flex: none;
  display: flex;
  align-items: center;
  justify-content: space-around;
  padding: 0 14px 0 16px;
  border-right: 2px solid #4d4d4d;
`;
const Tabs = styled.div`
  display: flex;
  gap: 14px;
  margin-left: 17px;
`;
const SheetTab = styled.div`
  position: relative;
  width: ${(p) => p.$w}px;
  height: 40px;
  margin-top: 6px;
  display: flex;
  align-items: center;
  justify-content: center;
  font-family: ${ARIAL};
  font-size: 25px;
  color: #000;
  background: #ffff9f;
  ${(p) => p.$fade && css`
    background: linear-gradient(90deg, #2b2b2b 0, #ffff9f 60%);
    padding-right: 10px;
  `}
  ${(p) => p.$active && css`
    height: 46px;
    margin: 0 -7px 0 -5px;
    background: #fff;
    color: #3c7d50;
    font-size: 24px;
    font-weight: 700;
    border-radius: 0 0 4px 4px;
  `}
`;
const TabRight = styled.div`
  margin-left: 55px;
  width: 75px;
  height: 42px;
  margin-top: 4px;
  display: flex;
  align-items: center;
  justify-content: center;
  border-left: 2px solid #444;
  border-right: 2px solid #444;
  color: #bbb;
  font-size: 38px;
  font-weight: 300;
`;
const StatusBar = styled.div`
  height: 45px;
  flex: none;
  display: flex;
  align-items: center;
  padding-left: 48px;
  color: #d0d0d0;
  font-size: 24px;
  background: linear-gradient(#4c4c4c, #3a3a3a);
`;
const StatusIcon = styled.div`
  margin: 0 8px 0 ${(p) => p.$ml}px;
  display: flex;
`;
const ViewGroup = styled.div`
  margin-left: auto;
  display: flex;
  align-items: center;
  height: 100%;
`;
const ViewBtn = styled.div`
  width: ${(p) => (p.$active ? 74 : 70)}px;
  height: 100%;
  margin-right: ${(p) => p.$mr || 0}px;
  display: flex;
  align-items: center;
  justify-content: center;
  ${(p) => p.$active && "background: #5a5a5a;"}
`;
const ZoomSign = styled.span`
  font-size: 30px;
  font-weight: 600;
  width: 26px;
  padding-left: ${(p) => p.$pl || 0}px;
  text-align: center;
`;
const Slider = styled.div`
  position: relative;
  width: 199px;
  height: 8px;
  margin: 0 10px;
  border-radius: 4px;
  background: #6e6e6e;
  &::after {
    content: "";
    position: absolute;
    left: 84px;
    top: -12px;
    width: 30px;
    height: 32px;
    border-radius: 50%;
    background: #8e8e8e;
  }
`;
const ZoomValue = styled.span`
  width: 62px;
  margin: 0 52px 0 28px;
`;
const Dock = styled.div`
  width: 2729px;
  height: 108px;
  margin: 4px 0 0 75px;
  padding: 13px 0 0 13px;
  flex: none;
  display: flex;
  align-items: flex-start;
  gap: 19px;
  border: 2px solid #4a4b4e;
  border-radius: 26px;
  background: linear-gradient(90deg, #212226 0, #2b2c2f 55%, #333538 80%, #4a5158 100%);
`;
const DockItem = styled.div`
  position: relative;
  width: 72px;
  flex: none;
  display: flex;
  flex-direction: column;
  align-items: center;
`;
const DockDot = styled.span`
  width: 6px;
  height: 7px;
  margin-top: 11px;
  border-radius: 50%;
  background: ${(p) => (p.$on ? "#a5a5a5" : "transparent")};
`;
const Badge = styled.span`
  position: absolute;
  top: -8px;
  right: -12px;
  width: 32px;
  height: 32px;
  border-radius: 50%;
  background: #df4a3c;
  color: #fff;
  font-size: 19px;
  display: flex;
  align-items: center;
  justify-content: center;
`;
const DockSep = styled.span`
  width: 2px;
  height: 82px;
  margin: 0 ${(p) => p.$r}px 0 ${(p) => p.$l}px;
  background: #555;
`;
const Thumbs = styled.div`
  display: flex;
  gap: 9px;
  margin-left: 3px;
  padding-top: 10px;
`;
const THUMB = {
  safari: css`
    background:
      repeating-linear-gradient(180deg, transparent 0 5px, #c6cdd6 5px 6px) 4px 0 / 26px 100% no-repeat,
      linear-gradient(#f4f6f8, #f4f6f8);
    border-top: 5px solid #2d4f7a;
  `,
  sheet: css`
    background:
      linear-gradient(#f2e878, #f2e878) 34px 10px / 36px 14px no-repeat,
      linear-gradient(#f2e878, #f2e878) 6px 28px / 26px 8px no-repeat,
      repeating-linear-gradient(180deg, transparent 0 5px, #ccc 5px 6px),
      linear-gradient(#fafafa, #fafafa);
    border-top: 7px solid #222;
  `,
};
const Thumb = styled.div`
  position: relative;
  width: 82px;
  height: 50px;
  ${(p) => THUMB[p.$kind]}
`;
const ThumbBadge = styled.div`
  position: absolute;
  right: 0;
  bottom: -16px;
`;
const BottomPeek = styled.div`
  flex: none;
  height: 11px;
  overflow: hidden;
  padding-left: 640px;
  color: #555;
  font-size: 24px;
  line-height: 28px;
  white-space: nowrap;
  display: flex;
  gap: 300px;
`;

const renderGrid = () => {
  const out = [<Corner key="corner" />];
  COLS.forEach(([c]) => out.push(<ColHead key={c} $active={c === "D"}>{c}</ColHead>));
  ROW_H.forEach((h, i) => {
    const n = i + 1;
    out.push(
      <RowHead key={"r" + n} $active={n === 20} $pb={h > 30 ? 4 : 0}>{n}</RowHead>
    );
    COLS.forEach(([c]) => {
      const id = c + n;
      const cell = CELLS[id] || {};
      if (cell.skip) return;
      out.push(
        <Cell key={id} $kind={cell.kind} $align={cell.align} $cs={cell.cs} $rs={cell.rs}>
          {cell.text}
          {id === "D20" && <Selection />}
        </Cell>
      );
    });
  });
  return out;
};

const DOCK = [
  ["finder", true], ["siri"], ["safari", true], ["mail"], ["contacts"], ["calendar"], ["brave", true], ["notes"], ["reminders"], ["maps"],
  ["tor"], ["photos"], ["messages", false, "18"], ["facetime"], ["booth"], ["firefox", true], ["news"], ["music", true], ["podcasts"],
  ["tv"], ["appstore"], ["prefs", false, "2"],
];
const DOCK_B = [["spotify", true], ["chrome", true], ["word", true], ["excel", true]];

const DockEntry = ({ name, on, badge }) => (
  <DockItem>
    {Tiles[name]}
    {badge && <Badge>{badge}</Badge>}
    <DockDot $on={on} />
  </DockItem>
);

const small = (icon, label, off, extra) => (
  <SmallRow key={label} $off={off}>
    <SmallIcon>{icon}</SmallIcon>
    {label}
    {extra && <ChevSlot><SmallChev c="#eee" /></ChevSlot>}
  </SmallRow>
);

const App = () => (
  <Page>
    <Global />
    <MenuBar>
      <AppleSlot><FaApple size={32} color="#f4f4f4" /></AppleSlot>
      <MenuItem $bold>Excel</MenuItem>
      {["File", "Edit", "View", "Insert", "Format", "Tools", "Data", "Window", "Help"].map((m) => <MenuItem key={m}>{m}</MenuItem>)}
      <MenuRight>
        {MenuIcons.map((ic, i) => <MenuIconSlot key={i} $w={MENU_X[i] + 36}>{ic}</MenuIconSlot>)}
        <Clock>Sun May 7  1:37 PM</Clock>
      </MenuRight>
    </MenuBar>

    <Window>
      <TitleBar>
        <TitleLeft>
          <Lights>
            <Light $c="#ee6a5f" /><Light $c="#f5bd4f" /><Light $c="#61c454" />
          </Lights>
          <AutoSave>AutoSave</AutoSave>
          <Toggle>OFF</Toggle>
          <Quick>
            <QuickBtn $w={53}><HomeIcon /></QuickBtn>
            <QuickBtn $w={54}><SaveIcon /></QuickBtn>
            <QuickBtn $w={55}><SaveAsIcon /></QuickBtn>
            <QuickBtn $w={48}><UndoIcon /></QuickBtn>
            <QuickBtn $w={30}><SmallChev /></QuickBtn>
            <QuickBtn $w={54}><RedoIcon /></QuickBtn>
            <QuickBtn $w={56}><ShapeIcon /></QuickBtn>
            <QuickBtn $w={52}><Dots>...</Dots></QuickBtn>
          </Quick>
        </TitleLeft>
        <DocTitle>
          <svg width="26" height="30" viewBox="0 0 26 30"><path d="M2 0h15l8 8v22H2z" fill="#f4f4f4" /><rect x="0" y="8" width="14" height="14" fill="#7fb79a" /><text x="7" y="19" fontSize="11" textAnchor="middle" fontFamily={ARIAL} fill="#fff">X</text></svg>
          Final Exam 2023 Spring- (Your Name Here)
          <SmallChev c="#666" />
        </DocTitle>
        <TitleRight>
          <Search size={36} color="#eee" strokeWidth={1.5} />
          <PeopleIcon />
        </TitleRight>
      </TitleBar>

      <RibbonTabs>
        {["Home", "Insert", "Draw", "Page Layout", "Formulas", "Data", "Review", "View", "Automate", "Developer"].map((t) => (
          <RibbonTab key={t} $active={t === "Data"}>{t}</RibbonTab>
        ))}
        <RibbonTab $ml={-16}><BulbIcon />Tell me</RibbonTab>
        <TopButtons>
          <TopButton $w={192}><CommentIcon />Comments</TopButton>
          <TopButton $w={133}><ShareIcon />Share</TopButton>
        </TopButtons>
      </RibbonTabs>

      <Ribbon>
        <Group $w={287} $first>
          <BigButton $w={200} $pl={12}>
            <IconSlot><GetDataIcon /></IconSlot>
            <BigLabel>{"Get Data (Power\nQuery)"}</BigLabel>
          </BigButton>
          <SmallCol $ml={3} $pt={6}><CameraIcon /></SmallCol>
        </Group>
        <Group $w={435}>
          <BigButton $w={124} $pl={8}>
            <IconSlot><RefreshIcon /></IconSlot>
            <BigLabel>{"Refresh\nAll"}</BigLabel>
          </BigButton>
          <SmallCol $ml={2}>
            {small(<QueriesIcon />, "Queries & Connections")}
            {small(<PropertiesIcon />, "Properties", true)}
            {small(<EditLinksIcon />, "Edit Links")}
          </SmallCol>
        </Group>
        <Group $w={411}>
          <StockBox>
            <StockItem>
              <StockIcon><StocksIcon /></StockIcon>
              <StockLabel>Stocks</StockLabel>
            </StockItem>
            <StockItem>
              <StockIcon><CurrencyIcon /></StockIcon>
              <StockLabel>Currencies</StockLabel>
            </StockItem>
            <StockMore>
              <Ic w={12} h={18} color="#eee" sw={2.5}><path d="M2 2l7 7-7 7" /></Ic>
            </StockMore>
          </StockBox>
        </Group>
        <Group $w={408}>
          <SortCol>
            <SortAZ />
            <SortAZ flip />
          </SortCol>
          <BigButton $w={56} $ml={20}>
            <IconSlot><SortIcon /></IconSlot>
            <BigLabel>Sort</BigLabel>
          </BigButton>
          <BigButton $w={54} $ml={20}>
            <IconSlot><FilterIcon /></IconSlot>
            <BigLabel>Filter</BigLabel>
          </BigButton>
          <SmallCol $ml={20}>
            {small(<ClearIcon />, "Clear", true)}
            {small(<ReapplyIcon />, "Reapply", true)}
            {small(<AdvancedIcon />, "Advanced")}
          </SmallCol>
        </Group>
        <Group $w={634}>
          <BigButton $w={126} $pl={2}>
            <IconSlot><TextColsIcon /></IconSlot>
            <BigLabel>{"Text to\nColumns"}</BigLabel>
          </BigButton>
          <SmallCol $ml={1} $pt={12} $w={260}>
            <SmallRow $h={56}><SmallIcon><FlashFillIcon /></SmallIcon>Flash Fill</SmallRow>
            <SmallRow $h={56}><SmallIcon><RemoveDupIcon /></SmallIcon>Remove Duplicates</SmallRow>
          </SmallCol>
          <SmallCol $pt={12}>
            <SmallRow $h={56}><SmallIcon><ValidationIcon /></SmallIcon>Data Validation<ChevSlot><SmallChev c="#eee" /></ChevSlot></SmallRow>
            <SmallRow $h={56}><SmallIcon><ConsolidateIcon /></SmallIcon>Consolidate</SmallRow>
          </SmallCol>
        </Group>
        <Group $w={137}>
          <BigButton $w={134}>
            <IconSlot><WhatIfIcon /></IconSlot>
            <BigLabel>{"What-If\nAnalysis"}</BigLabel>
          </BigButton>
        </Group>
        <Group $w={263}>
          <SmallCol $ml={26} $w={175}>
            {small(<GroupIcon />, "Group", false, true)}
            {small(<UngroupIcon />, "Ungroup", false, true)}
            {small(<SubtotalIcon />, "Subtotal")}
          </SmallCol>
          <IndentCol>
            <IndentIcon plus color="#4f7a55" />
            <IndentIcon color="#7a3b3b" />
          </IndentCol>
        </Group>
        <Group $w={305}>
          <SmallCol $ml={24}>
            {small(<Settings size={34} color={G} strokeWidth={1.2} />, "Analysis Tools")}
            {small(<DataAnalysisIcon />, "Data Analysis")}
            {small(<SolverIcon />, "Solver")}
          </SmallCol>
        </Group>
      </Ribbon>

      <FormulaBar>
        <NameBox>
          D20
          <Stepper>
            <Ic w={14} h={12} color="#bbb"><path d="M7 1l6 10H1z" fill="#bbb" /></Ic>
            <Ic w={14} h={12} color="#bbb"><path d="M1 1h12L7 11z" fill="#bbb" /></Ic>
          </Stepper>
        </NameBox>
        <FormulaTools>
          <Ic w={24} h={24} color="#666" sw={4}><path d="M3 3l18 18M21 3L3 21" /></Ic>
          <Ic w={26} h={24} color="#666" sw={4}><path d="M2 13l7 8L24 2" /></Ic>
          <Fx>fx</Fx>
        </FormulaTools>
        <FormulaInput>55</FormulaInput>
        <FormulaMore><Ic w={16} h={14} color="#bbb"><path d="M1 1h14L8 13z" fill="#bbb" /></Ic></FormulaMore>
      </FormulaBar>
      <Strip />

      <SheetArea>
        <Grid>{renderGrid()}</Grid>
        <VScroll />
        <HScroll />
      </SheetArea>

      <TabBar>
        <TabNav>
          <Ic w={16} h={24} color="#999"><path d="M14 1L2 12l12 11z" fill="#999" /></Ic>
          <Ic w={16} h={24} color="#999"><path d="M2 1l12 11L2 23z" fill="#999" /></Ic>
        </TabNav>
        <Tabs>
          {SHEETS.map(([name, w], i) => (
            <SheetTab key={name} $w={w} $fade={i === 0} $active={name === "XLookup"}>{name}</SheetTab>
          ))}
        </Tabs>
        <TabRight>+</TabRight>
      </TabBar>

      <StatusBar>
        Ready
        <StatusIcon $ml={38}>
          <Ic w={30} h={32} color="#eee"><path d="M4 2h9v8H4zM22 2h6v22M18 10v20H4v-6" /></Ic>
        </StatusIcon>
        <StatusIcon $ml={26}><PersonStanding size={32} color="#ddd" strokeWidth={1.4} /></StatusIcon>
        Accessibility: Investigate
        <ViewGroup>
          <ViewBtn $active>
            <Ic w={28} h={30} color="#eee"><rect x="1" y="1" width="26" height="28" /><path d="M10 1v28M18 1v28M1 10h26M1 19h26" /></Ic>
          </ViewBtn>
          <ViewBtn>
            <Ic w={28} h={30} color="#eee"><rect x="1" y="1" width="26" height="28" /><path d="M9 8h12M9 14h12M9 20h12" strokeWidth="3" /></Ic>
          </ViewBtn>
          <ViewBtn $mr={13}>
            <Ic w={28} h={30} color="#eee"><rect x="1" y="1" width="26" height="28" /><path d="M1 20h26M14 1v19" /></Ic>
          </ViewBtn>
          <ZoomSign $pl={10}>-</ZoomSign>
          <Slider />
          <ZoomSign>+</ZoomSign>
          <ZoomValue>100%</ZoomValue>
        </ViewGroup>
      </StatusBar>
    </Window>

    <Dock>
      {DOCK.map(([n, on, b]) => <DockEntry key={n} name={n} on={on} badge={b} />)}
      <DockSep $l={11} $r={8} />
      {DOCK_B.map(([n, on]) => <DockEntry key={n} name={n} on={on} />)}
      <DockSep $l={13} $r={0} />
      <Thumbs>
        <Thumb $kind="safari"><ThumbBadge><Ic w={26} h={34} color="#3b8fe8"><circle cx="13" cy="17" r="12" fill="#3b8fe8" stroke="#fff" /><path d="M18 11l-4 7-3-2z" fill="#e4423c" stroke="none" /></Ic></ThumbBadge></Thumb>
        <Thumb $kind="sheet"><ThumbBadge><Ic w={26} h={34} color="#21734a"><rect x="1" y="4" width="24" height="28" rx="4" fill="#21734a" stroke="#fff" /></Ic></ThumbBadge></Thumb>
      </Thumbs>
      <DockItem>
        <svg width="60" height="82" viewBox="0 0 60 82" style={{ display: "block", marginTop: -6 }}>
          <path d="M6 10h48l-6 66q-18 6-36 0z" fill="#6f7276" />
          <ellipse cx="30" cy="10" rx="24" ry="7" fill="#b9bcc0" />
        </svg>
      </DockItem>
    </Dock>
    <BottomPeek>
      <span>Brave Br...</span>
    </BottomPeek>
  </Page>
);

export default App;
